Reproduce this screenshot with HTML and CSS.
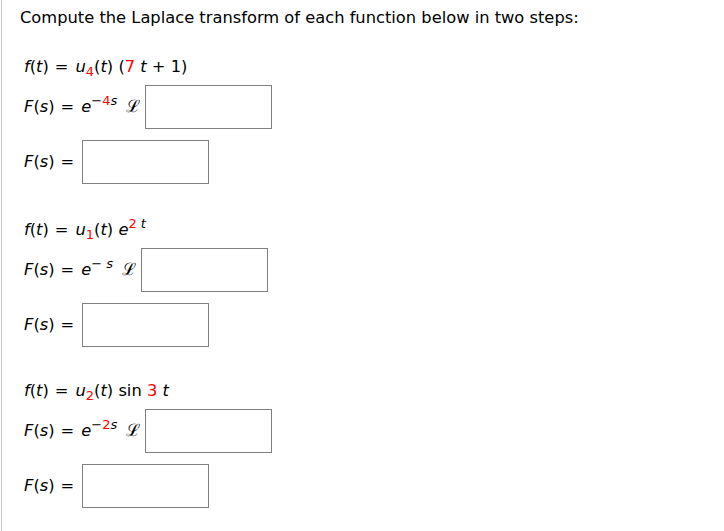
FILE: index.html
```html
<!DOCTYPE html>
<html>
<head>
<meta charset="utf-8">
<link rel="stylesheet" href="styles.css">
</head>
<body>
<div class="page">
  <p class="intro">Compute the Laplace transform of each function below in two steps:</p>

  <div class="problem">
    <div class="row fn"><span class="m"><i>f</i>(<i>t</i>)<span class="eq">=</span><i>u</i><sub class="red">4</sub>(<i>t</i>) (<span class="red">7</span> <i>t</i> + 1)</span></div>
    <div class="row"><span class="m"><i>F</i>(<i>s</i>)<span class="eq">=</span><i>e</i><sup>−<span class="red">4</span><i>s</i></sup> <span class="lap">ℒ</span></span><input class="box" type="text"></div>
    <div class="row"><span class="m"><i>F</i>(<i>s</i>)<span class="eq">=</span></span><input class="box" type="text"></div>
  </div>

  <div class="problem second">
    <div class="row fn"><span class="m"><i>f</i>(<i>t</i>)<span class="eq">=</span><i>u</i><sub class="red">1</sub>(<i>t</i>) <i>e</i><sup><span class="red">2</span> <i>t</i></sup></span></div>
    <div class="row"><span class="m"><i>F</i>(<i>s</i>)<span class="eq">=</span><i>e</i><sup>− <i>s</i></sup> <span class="lap">ℒ</span></span><input class="box" type="text"></div>
    <div class="row"><span class="m"><i>F</i>(<i>s</i>)<span class="eq">=</span></span><input class="box" type="text"></div>
  </div>

  <div class="problem third">
    <div class="row fn"><span class="m"><i>f</i>(<i>t</i>)<span class="eq">=</span><i>u</i><sub class="red">2</sub>(<i>t</i>) sin <span class="red">3</span> <i>t</i></span></div>
    <div class="row"><span class="m"><i>F</i>(<i>s</i>)<span class="eq">=</span><i>e</i><sup>−<span class="red">2</span><i>s</i></sup> <span class="lap">ℒ</span></span><input class="box" type="text"></div>
    <div class="row"><span class="m"><i>F</i>(<i>s</i>)<span class="eq">=</span></span><input class="box" type="text"></div>
  </div>
</div>
</body>
</html>
```

FILE: styles.css
```css
html, body {
  margin: 0;
  padding: 0;
  background: #fff;
}

body {
  font-family: "DejaVu Sans", Verdana, sans-serif;
  font-size: 16.3px;
  color: #000;
}

.page {
  margin-left: 1px;
  border-left: 1px solid #c8c8c8;
  padding: 8px 0 0 18px;
  min-height: 523px;
}

.intro {
  margin: 0;
  line-height: 20px;
}

.problem {
  display: flex;
  flex-direction: column;
  gap: 11px;
  margin-top: 33px;
}

.problem:first-of-type {
  margin-top: 27px;
}

.problem.second {
  margin-top: 34px;
}

.problem.third {
  margin-top: 32px;
}

.row {
  display: flex;
  align-items: center;
  height: 44px;
}

.row.fn {
  height: 24px;
  margin-bottom: -5px;
}

.m {
  white-space: pre;
  line-height: 20px;
  margin-left: 4px;
  flex: none;
}

.m i {
  font-style: italic;
}

.eq {
  padding: 0 7px 0 6px;
}

.red {
  color: #f00;
}

sub, sup {
  font-size: 13px;
  line-height: 0;
}

sub {
  vertical-align: -4px;
}

sup {
  vertical-align: 7px;
}

.lap {
  display: inline-block;
  width: 22px;
  text-align: center;
  font-family: "Liberation Serif", serif;
  font-size: 17px;
}

.box {
  box-sizing: border-box;
  flex: none;
  width: 127px;
  height: 44px;
  margin: 0 0 0 1px;
  border: 1px solid #808080;
  background: #fff;
  padding: 0;
}
```
